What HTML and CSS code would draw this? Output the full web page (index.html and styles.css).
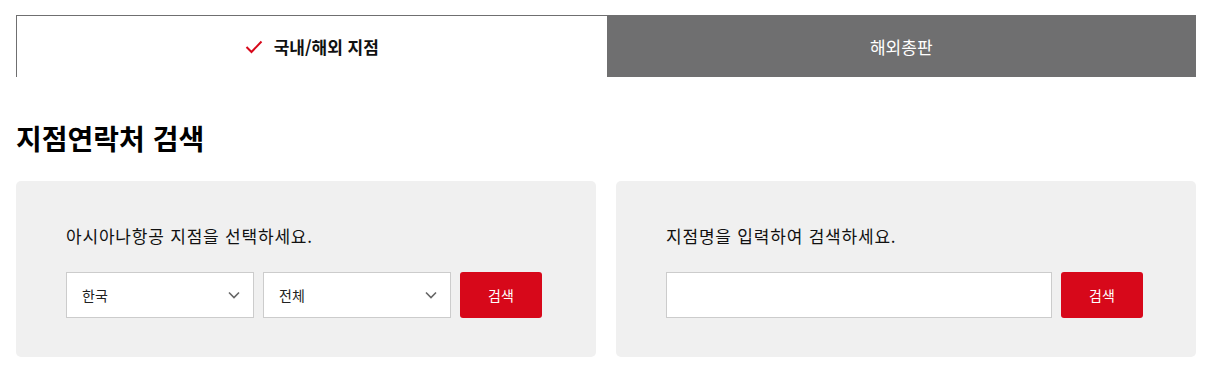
FILE: index.html
```html
<!DOCTYPE html>
<html lang="ko">
<head>
    <meta charset="UTF-8">
    <meta name="viewport" content="width=device-width, initial-scale=1.0">
    <title>지점연락처 검색</title>
    <link rel="stylesheet" href="styles.css">
</head>
<body>

<div class="container">
    <!-- 탭 -->
    <div class="tabs">
        <a class="tab active" href="#">
            <svg class="check" width="18" height="14" viewBox="0 0 18 14">
                <path d="M1.5 7 L6.5 12 L16.5 1.5" fill="none" stroke="#d7081a" stroke-width="2"/>
            </svg>
            국내/해외 지점
        </a>
        <a class="tab" href="#">해외총판</a>
    </div>

    <h2 class="title">지점연락처 검색</h2>

    <div class="search-boxes">
        <div class="search-box">
            <p class="guide">아시아나항공 지점을 선택하세요.</p>
            <div class="search-row">
                <div class="select">
                    <span>한국</span>
                    <svg class="arrow" width="12" height="8" viewBox="0 0 12 8">
                        <path d="M1 1.5 L6 6.5 L11 1.5" fill="none" stroke="#666" stroke-width="1.6"/>
                    </svg>
                </div>
                <div class="select">
                    <span>전체</span>
                    <svg class="arrow" width="12" height="8" viewBox="0 0 12 8">
                        <path d="M1 1.5 L6 6.5 L11 1.5" fill="none" stroke="#666" stroke-width="1.6"/>
                    </svg>
                </div>
                <button type="button" class="btn-search">검색</button>
            </div>
        </div>

        <div class="search-box">
            <p class="guide">지점명을 입력하여 검색하세요.</p>
            <div class="search-row">
                <input type="text" class="keyword">
                <button type="button" class="btn-search">검색</button>
            </div>
        </div>
    </div>
</div>

</body>
</html>
```

FILE: styles.css
```css
body {
    margin: 0;
    padding: 15px 0 0 16px;
    font-family: "Noto Sans CJK KR", "Noto Sans", sans-serif;
    color: #111;
    background: #fff;
}
.container {
    width: 1180px;
}
.tabs {
    display: flex;
    height: 62px;
}
.tab {
    flex: 1;
    display: flex;
    align-items: center;
    justify-content: center;
    font-size: 17px;
    color: #fff;
    background-color: #6f6f70;
    text-decoration: none;
}
.tab.active {
    background: #fff;
    color: #111;
    font-weight: bold;
    border-top: 1px solid #6f6f70;
    border-left: 1px solid #6f6f70;
    box-sizing: border-box;
}
.check {
    margin-right: 11px;
}
.title {
    font-size: 28px;
    line-height: 40px;
    font-weight: bold;
    margin: 41px 0 23px;
    color: #000;
}
.search-boxes {
    display: flex;
    gap: 20px;
}
.search-box {
    flex: 1;
    background-color: #f0f0f0;
    border-radius: 5px;
    padding: 43px 50px 39px;
}
.guide {
    margin: 0 0 24px;
    font-size: 17px;
    line-height: 24px;
    letter-spacing: 0.8px;
    color: #111;
}
.search-row {
    display: flex;
    gap: 9px;
    height: 46px;
}
.select {
    width: 188px;
    box-sizing: border-box;
    background: #fff;
    border: 1px solid #ccc;
    display: flex;
    align-items: center;
    justify-content: space-between;
    padding: 0 13px 0 15px;
    font-size: 14px;
    color: #222;
}
.keyword {
    width: 386px;
    box-sizing: border-box;
    border: 1px solid #ccc;
    margin: 0;
    padding: 0 15px;
    background: #fff;
}
.btn-search {
    width: 82px;
    border: none;
    border-radius: 3px;
    background-color: #d7081a;
    color: #fff;
    font-family: inherit;
    font-size: 14px;
    cursor: pointer;
}
```
